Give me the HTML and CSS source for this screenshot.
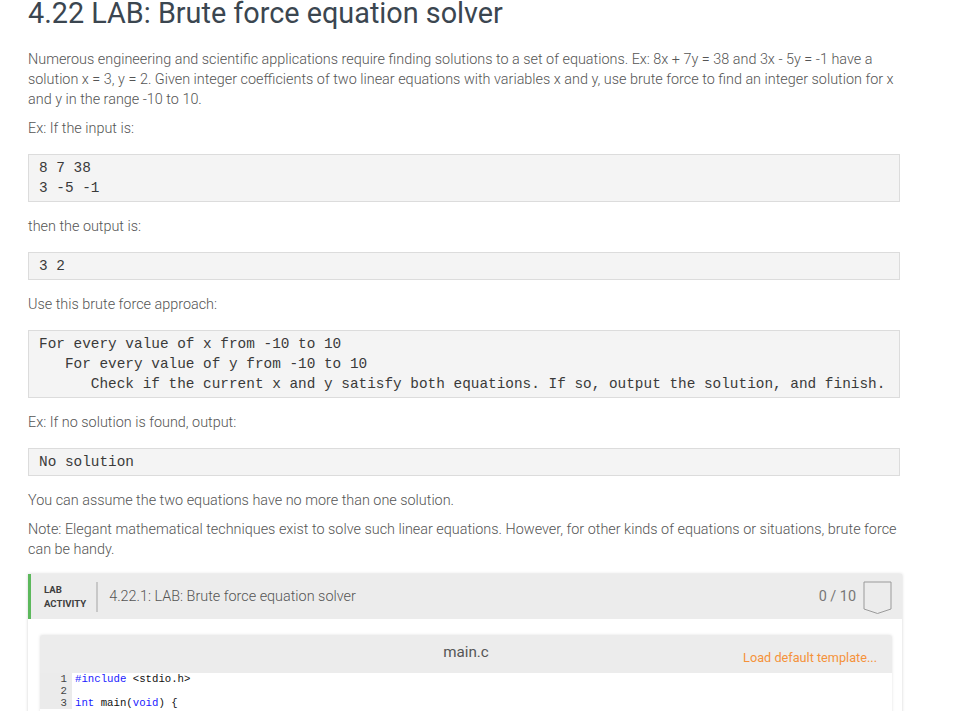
FILE: index.html
```html
<!DOCTYPE html>
<html>
<head>
<meta charset="utf-8">
<link rel="stylesheet" href="styles.css">
</head>
<body>
<main class="page">
  <h1 class="title">4.22 LAB: Brute force equation solver</h1>
  <p>Numerous engineering and scientific applications require finding solutions to a set of equations. Ex: 8x + 7y = 38 and 3x - 5y = -1 have a solution x = 3, y = 2. Given integer coefficients of two linear equations with variables x and y, use brute force to find an integer solution for x and y in the range -10 to 10.</p>
  <p>Ex: If the input is:</p>
  <pre class="code">8 7 38
3 -5 -1</pre>
  <p>then the output is:</p>
  <pre class="code">3 2</pre>
  <p>Use this brute force approach:</p>
  <pre class="code">For every value of x from -10 to 10
   For every value of y from -10 to 10
      Check if the current x and y satisfy both equations. If so, output the solution, and finish.</pre>
  <p>Ex: If no solution is found, output:</p>
  <pre class="code">No solution</pre>
  <p>You can assume the two equations have no more than one solution.</p>
  <p>Note: Elegant mathematical techniques exist to solve such linear equations. However, for other kinds of equations or situations, brute force can be handy.</p>

  <section class="lab">
    <header class="lab-head">
      <div class="lab-label">LAB<br>ACTIVITY</div>
      <div class="lab-name">4.22.1: LAB: Brute force equation solver</div>
      <div class="lab-score">0 / 10</div>
      <svg class="badge" width="29" height="34" viewBox="0 0 29 34">
        <path d="M1 1 H28 V28 L14.5 32.5 L1 28 Z" fill="none" stroke="#9a9a9a" stroke-width="1"/>
      </svg>
    </header>
    <div class="lab-body">
      <div class="editor">
        <div class="editor-head">
          <span></span>
          <span class="file">main.c</span>
          <a class="load">Load default template...</a>
        </div>
        <div class="editor-code">
          <div class="gutter">1<br>2<br>3</div>
          <pre class="src"><span class="kw">#include</span> &lt;stdio.h&gt;

<span class="kw">int</span> main(<span class="kw">void</span>) {</pre>
        </div>
      </div>
    </div>
  </section>
</main>
</body>
</html>
```
FILE: styles.css
```css
html, body {
  margin: 0;
  padding: 0;
  background: #fff;
}
body {
  font-family: Roboto, "Liberation Sans", sans-serif;
  font-weight: 300;
  font-size: 14.4px;
  line-height: 20px;
  color: #555;
}
.page {
  width: 872px;
  padding-left: 28px;
}
.title {
  margin: 0 0 24px;
  font-weight: 400;
  font-size: 28.8px;
  line-height: 26px;
  color: #3b4650;
}
p {
  margin: 0 0 9px;
}
.code {
  margin: 15px 0 15px;
  padding: 3px 10px;
  background: #f4f4f4;
  border: 1px solid #dcdcdc;
  font-family: "Liberation Mono", monospace;
  font-size: 14.4px;
  line-height: 20px;
  color: #3a3a3a;
  white-space: pre;
}
.lab {
  margin-top: 14px;
  width: 874px;
  box-shadow: 0 0 3px rgba(0,0,0,0.18);
}
.lab-head {
  display: flex;
  align-items: center;
  height: 45px;
  background: #ececec;
  border-left: 3px solid #5cb85c;
  padding: 0 10px 0 13px;
}
.lab-label {
  font-weight: 700;
  font-size: 9.6px;
  line-height: 14px;
  color: #3e3e3e;
  padding-right: 10px;
  border-right: 2px solid #c8c8c8;
  height: 30px;
  display: flex;
  align-items: center;
}
.lab-name {
  flex: 1;
  padding-left: 11px;
  font-size: 14.4px;
  color: #555;
}
.lab-score {
  font-weight: 400;
  font-size: 14.4px;
  color: #777;
  margin-right: 7px;
}
.badge {
  display: block;
  margin-top: 2px;
}
.lab-body {
  padding: 16px 10px 0 12px;
  background: #fff;
}
.editor {
  box-shadow: 0 0 3px rgba(0,0,0,0.12);
  border-radius: 2px;
}
.editor-head {
  display: grid;
  grid-template-columns: 1fr auto 1fr;
  height: 38px;
  background: #ececec;
  border-radius: 2px 2px 0 0;
}
.file {
  font-weight: 400;
  font-size: 15.2px;
  color: #555;
  padding-top: 7px;
}
.load {
  justify-self: end;
  align-self: end;
  padding: 0 15px 5px 0;
  font-weight: 400;
  font-size: 12.7px;
  color: #f5923a;
}
.editor-code {
  display: flex;
  background: #fff;
  font-family: "Liberation Mono", monospace;
  font-size: 10.7px;
  line-height: 12px;
  padding-bottom: 20px;
}
.gutter {
  width: 27px;
  padding-right: 5px;
  text-align: right;
  background: #ebebeb;
  color: #444;
}
.src {
  margin: 0;
  padding-left: 3px;
  font: inherit;
  color: #111;
}
.kw {
  color: #1a1aff;
}
```
